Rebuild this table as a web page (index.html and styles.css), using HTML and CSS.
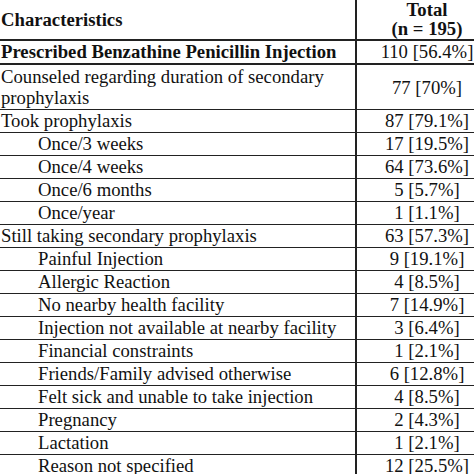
FILE: index.html
```html
<!DOCTYPE html>
<html lang="en">
<head>
  <meta charset="UTF-8">
  <meta name="viewport" content="width=device-width, initial-scale=1.0">
  <title>Secondary prophylaxis</title>
  <link rel="stylesheet" href="styles.css">
</head>
<body>
  <table class="stats">
    <thead>
      <tr class="head-row">
        <th class="label">Characteristics</th>
        <th class="value">Total<br>(n = 195)</th>
      </tr>
    </thead>
    <tbody>
      <tr class="strong-row">
        <td class="label"><strong>Prescribed Benzathine Penicillin Injection</strong></td>
        <td class="value">110 [56.4%]</td>
      </tr>
      <tr class="tall-row">
        <td class="label">Counseled regarding duration of secondary<br>prophylaxis</td>
        <td class="value">77 [70%]</td>
      </tr>
      <tr>
        <td class="label">Took prophylaxis</td>
        <td class="value">87 [79.1%]</td>
      </tr>
      <tr>
        <td class="label sub">Once/3 weeks</td>
        <td class="value">17 [19.5%]</td>
      </tr>
      <tr>
        <td class="label sub">Once/4 weeks</td>
        <td class="value">64 [73.6%]</td>
      </tr>
      <tr>
        <td class="label sub">Once/6 months</td>
        <td class="value">5 [5.7%]</td>
      </tr>
      <tr>
        <td class="label sub">Once/year</td>
        <td class="value">1 [1.1%]</td>
      </tr>
      <tr>
        <td class="label">Still taking secondary prophylaxis</td>
        <td class="value">63 [57.3%]</td>
      </tr>
      <tr>
        <td class="label sub">Painful Injection</td>
        <td class="value">9 [19.1%]</td>
      </tr>
      <tr>
        <td class="label sub">Allergic Reaction</td>
        <td class="value">4 [8.5%]</td>
      </tr>
      <tr>
        <td class="label sub">No nearby health facility</td>
        <td class="value">7 [14.9%]</td>
      </tr>
      <tr>
        <td class="label sub">Injection not available at nearby facility</td>
        <td class="value">3 [6.4%]</td>
      </tr>
      <tr>
        <td class="label sub">Financial constraints</td>
        <td class="value">1 [2.1%]</td>
      </tr>
      <tr>
        <td class="label sub">Friends/Family advised otherwise</td>
        <td class="value">6 [12.8%]</td>
      </tr>
      <tr>
        <td class="label sub">Felt sick and unable to take injection</td>
        <td class="value">4 [8.5%]</td>
      </tr>
      <tr>
        <td class="label sub">Pregnancy</td>
        <td class="value">2 [4.3%]</td>
      </tr>
      <tr>
        <td class="label sub">Lactation</td>
        <td class="value">1 [2.1%]</td>
      </tr>
      <tr>
        <td class="label sub">Reason not specified</td>
        <td class="value">12 [25.5%]</td>
      </tr>
    </tbody>
  </table>
</body>
</html>
```

FILE: styles.css
```css
/* Page */
html, body {
  margin: 0;
  padding: 0;
  background-color: #fff;
  overflow: hidden;
}

body {
  font-family: "Liberation Serif", "Times New Roman", serif;
  font-size: 18.7px;
  color: #111;
}

/* Table */
.stats {
  border-collapse: collapse;
  width: 496px;
  table-layout: fixed;
}

.stats td,
.stats th {
  padding: 1px 0 1px 1px;
  line-height: 20px;
  border-bottom: 1px solid #222;
  white-space: nowrap;
}

.stats .label {
  width: 354px;
  text-align: left;
}

.stats .value {
  text-align: center;
  border-left: 2px solid #222;
  vertical-align: middle;
}

.stats .sub {
  padding-left: 38px;
}

/* Header */
.head-row th {
  font-weight: bold;
  line-height: 19px;
  padding-top: 0;
  padding-bottom: 1px;
  border-bottom: 2px solid #222;
}

.head-row .label {
  vertical-align: middle;
}

.strong-row td {
  border-bottom: 2px solid #222;
}

.tall-row td {
  line-height: 21px;
}

.tall-row .label {
  vertical-align: top;
}
```
